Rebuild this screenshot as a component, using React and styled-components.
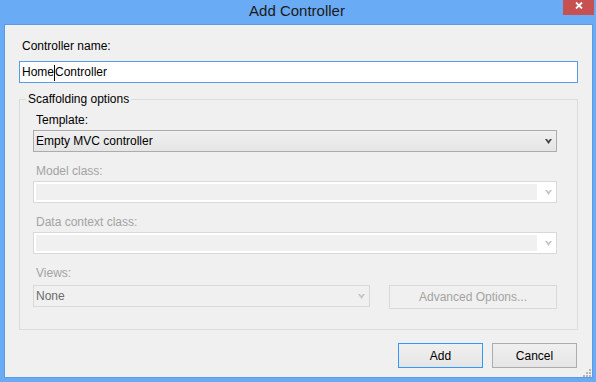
import React from "react";
import styled, { createGlobalStyle } from "styled-components";

const GlobalStyle = createGlobalStyle`
  body {
    margin: 0;
    font-family: "Segoe UI", "Liberation Sans", Arial, sans-serif;
    font-size: 12px;
  }
`;

const Chevron = ({ color = "#404040" }) => (
  <svg width="7" height="5" viewBox="0 0 7 5">
    <path d="M0 0h2l1.5 2L5 0h2L3.5 5z" fill={color} />
  </svg>
);

const Grip = () => (
  <svg width="8" height="8" viewBox="0 0 8 8" fill="#b4b4b4">
    <rect x="6" y="0" width="2" height="2" />
    <rect x="3" y="3" width="2" height="2" />
    <rect x="6" y="3" width="2" height="2" />
    <rect x="0" y="6" width="2" height="2" />
    <rect x="3" y="6" width="2" height="2" />
    <rect x="6" y="6" width="2" height="2" />
  </svg>
);

export default function App() {
  return (
    <>
      <GlobalStyle />
      <Window>
        <TitleBar>
          <span />
          <Title>Add Controller</Title>
          <CloseButton aria-label="Close">
            <svg width="8" height="7" viewBox="0 0 8 7">
              <path d="M1 0.5l6 6M7 0.5l-6 6" stroke="#fff" strokeWidth="1.8" />
            </svg>
          </CloseButton>
        </TitleBar>

        <Body>
          <Label>Controller name:</Label>
          <TextField>
            Home<Caret />Controller
          </TextField>

          <GroupBox>
            <Legend>Scaffolding options</Legend>
            <Stack>
              <Field>
                <Label>Template:</Label>
                <Combo>
                  <ComboValue>Empty MVC controller</ComboValue>
                  <ChevronSlot $gap={4}>
                    <Chevron />
                  </ChevronSlot>
                </Combo>
              </Field>

              <Field>
                <Label $disabled>Model class:</Label>
                <DisabledCombo>
                  <EditArea />
                  <ChevronSlot $gap={2}>
                    <Chevron color="#c4c4c4" />
                  </ChevronSlot>
                </DisabledCombo>
              </Field>

              <Field>
                <Label $disabled>Data context class:</Label>
                <DisabledCombo>
                  <EditArea />
                  <ChevronSlot $gap={2}>
                    <Chevron color="#c4c4c4" />
                  </ChevronSlot>
                </DisabledCombo>
              </Field>

              <Field $gap={4}>
                <Label $disabled>Views:</Label>
                <ViewsRow>
                  <Combo $disabled>
                    <ComboValue $disabled>None</ComboValue>
                    <ChevronSlot $gap={4}>
                      <Chevron color="#c4c4c4" />
                    </ChevronSlot>
                  </Combo>
                  <Button disabled>Advanced Options...</Button>
                </ViewsRow>
              </Field>
            </Stack>
          </GroupBox>

          <Footer>
            <Button $default>Add</Button>
            <Button>Cancel</Button>
          </Footer>

          <GripCorner>
            <Grip />
          </GripCorner>
        </Body>
      </Window>
    </>
  );
}

const Window = styled.div`
  width: 596px;
  height: 382px;
  background: #6aabf5;
  display: flex;
  flex-direction: column;
`;

const TitleBar = styled.div`
  height: 24px;
  flex: none;
  display: grid;
  grid-template-columns: 1fr auto 1fr;
  padding-right: 2px;
`;

const Title = styled.div`
  font-size: 15px;
  line-height: 22px;
  color: #1a1a1a;
  white-space: nowrap;
`;

const CloseButton = styled.div`
  justify-self: end;
  width: 31px;
  height: 15px;
  background: #c75050;
  display: flex;
  justify-content: center;
  align-items: flex-start;
  padding-top: 2px;
  box-sizing: border-box;
`;

const Body = styled.div`
  flex: 1;
  position: relative;
  margin: 0 3px 4px 4px;
  background: #f0f0f0;
  border: 1px solid #5b9ae4;
  padding: 13px 14px 0;
  display: flex;
  flex-direction: column;
`;

const Label = styled.div`
  line-height: 16px;
  padding-left: 3px;
  color: ${p => (p.$disabled ? "#a3a3a3" : "#000")};
`;

const TextField = styled.div`
  margin-top: 7px;
  height: 22px;
  box-sizing: border-box;
  border: 1px solid #569de5;
  background: #fff;
  padding: 0 2px;
  line-height: 20px;
  display: flex;
  align-items: center;
  color: #000;
`;

const Caret = styled.span`
  width: 1px;
  height: 16px;
  background: #000;
  margin-top: 1px;
`;

const GroupBox = styled.fieldset`
  margin: 8px 0 0;
  border: 1px solid #dcdcdc;
  padding: 5px 20px 20px 13px;
  min-width: 0;
`;

const Legend = styled.legend`
  margin-left: -7px;
  padding: 0 2px;
  line-height: 16px;
  color: #000;
`;

const Stack = styled.div`
  display: flex;
  flex-direction: column;
  gap: 11px;
`;

const Field = styled.div`
  display: flex;
  flex-direction: column;
  gap: ${p => p.$gap ?? 2}px;
`;

const Combo = styled.div`
  height: 22px;
  box-sizing: border-box;
  display: flex;
  align-items: center;
  border: 1px solid ${p => (p.$disabled ? "#d9d9d9" : "#acacac")};
  background: ${p => (p.$disabled ? "#f0f0f0" : "linear-gradient(#f0f0f0, #e5e5e5)")};
  padding-left: 2px;
  ${p => p.$disabled && "width: 337px; flex: none;"}
`;

const ComboValue = styled.div`
  flex: 1;
  line-height: 19px;
  padding-top: 1px;
  color: ${p => (p.$disabled ? "#6d6d6d" : "#000")};
`;

const ChevronSlot = styled.div`
  display: flex;
  margin: 0 ${p => p.$gap}px 0 8px;
`;

const DisabledCombo = styled.div`
  height: 22px;
  box-sizing: border-box;
  display: flex;
  align-items: center;
  border: 1px solid #d9d9d9;
  background: #fff;
  padding: 2px;
`;

const EditArea = styled.div`
  flex: 1;
  align-self: stretch;
  background: #f0f0f0;
`;

const ViewsRow = styled.div`
  display: flex;
  align-items: flex-start;
  gap: 19px;
`;

const Button = styled.button`
  font: inherit;
  height: ${p => (p.disabled ? 24 : 25)}px;
  box-sizing: border-box;
  padding: 0;
  border: 1px solid ${p => (p.$default ? "#3399ff" : p.disabled ? "#d9d9d9" : "#acacac")};
  background: ${p => (p.disabled ? "#f0f0f0" : "linear-gradient(#f0f0f0, #e5e5e5)")};
  color: ${p => (p.disabled ? "#a3a3a3" : "#000")};
  flex: ${p => (p.disabled ? "1" : "none")};
  width: ${p => (p.disabled ? "auto" : "85px")};
`;

const Footer = styled.div`
  margin-top: 13px;
  display: flex;
  justify-content: flex-end;
  gap: 9px;
  padding-right: 1px;
`;

const GripCorner = styled.div`
  position: absolute;
  right: 1px;
  bottom: 0;
  display: flex;
`;
